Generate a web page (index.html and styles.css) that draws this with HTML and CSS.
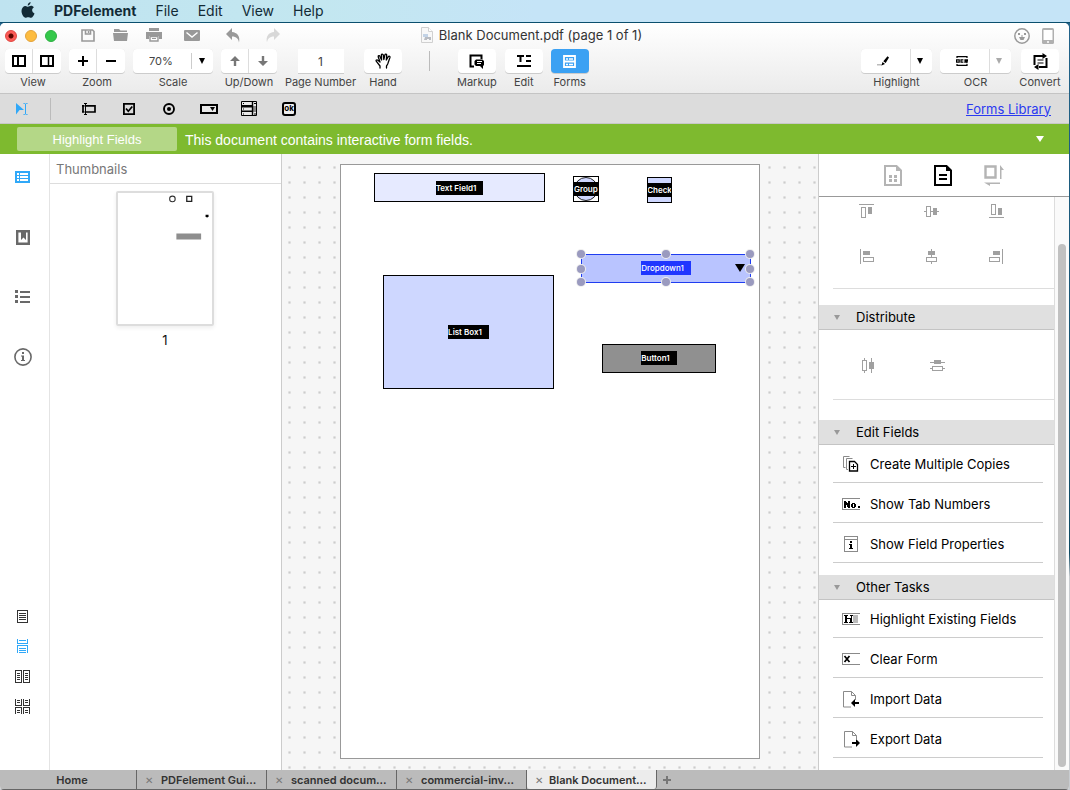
FILE: index.html
```html
<!DOCTYPE html>
<html lang="en">
<head>
<meta charset="utf-8">
<title>Blank Document.pdf (page 1 of 1)</title>
<link rel="stylesheet" href="styles.css">
</head>
<body>
<nav class="menubar" aria-label="Application menu">
  <button class="menu apple" aria-label="System menu"><svg width="14" height="17" viewBox="0 0 14 17"><path fill="currentColor" d="M9.6 0c.1 1.700-1.100 3.400-2.900 3.600C6.500 2 8 .3 9.600 0zM7 4.700c.7 0 1.600-.9 3-.9 1.200 0 2.300.6 2.900 1.500-2.600 1.600-2.200 5 .6 6.100-.6 1.700-2 4.400-3.600 4.400-1 0-1.400-.6-2.700-.6s-1.800.6-2.700.6C2.700 15.800.5 12.200.5 9.100c0-3.200 1.900-5.200 4-5.200 1.100 0 1.900.8 2.500.8z"/></svg></button>
  <button class="menu menu-app">PDFelement</button>
  <button class="menu">File</button>
  <button class="menu">Edit</button>
  <button class="menu">View</button>
  <button class="menu">Help</button>
</nav>

<div class="window">
  <header class="chrome">
    <div class="titlebar">
      <div class="title-left">
        <div class="lights">
          <button class="light close" aria-label="Close"></button>
          <button class="light minimize" aria-label="Minimize"></button>
          <button class="light maximize" aria-label="Zoom window"></button>
        </div>
        <div class="quick">
          <button aria-label="Save"><svg width="14" height="13" viewBox="0 0 14 13" fill="none" stroke="#999" stroke-width="1.600"><path d="M1 1h10.500L13 2.500V12H1z"/><path d="M4.500 1v4h5V1"/><path d="M7.500 2v2" stroke-width="1.400"/></svg></button>
          <button aria-label="Open"><svg width="15" height="12" viewBox="0 0 15 12" fill="#999"><path d="M1 0h5l1.500 1.500H14V3H1zM0 4h15l-1 8H1z"/></svg></button>
          <button aria-label="Print"><svg width="16" height="14" viewBox="0 0 16 14"><path fill="#999" d="M3 0h10v3H3zM0 4h16v7h-3V8H3v3H0z"/><path d="M4 8.500h8V13H4z" fill="#fff" stroke="#999" stroke-width="1.400"/><path d="M6 10.500h4" stroke="#999"/></svg></button>
          <button aria-label="Mail"><svg width="16" height="11" viewBox="0 0 16 11"><rect width="16" height="11" rx="1" fill="#999"/><path d="M2.500 2.500 8 7l5.500-4.500" fill="none" stroke="#fff" stroke-width="1.400"/></svg></button>
          <button aria-label="Undo"><svg width="15" height="15" viewBox="0 0 15 15" fill="#999"><path d="M6 0v4c5 .2 8.500 4.500 7 10.500C12.500 11 10.500 8.500 6 8.500V12L0 6z"/></svg></button>
          <button aria-label="Redo"><svg width="15" height="15" viewBox="0 0 15 15" fill="#d8d8d8"><path d="M9 0v4C4 4.200.5 8.500 2 14.500 2.500 11 4.500 8.500 9 8.500V12l6-6z"/></svg></button>
        </div>
      </div>
      <div class="title">
        <svg width="12" height="16" viewBox="0 0 12 16"><path d="M.5.500h7l4 4v11H.5z" fill="#f8f8f8" stroke="#d0d0d0"/><path d="M7.500.500v4h4" fill="#fff" stroke="#d0d0d0"/><path d="M2 7h5v3H2z" fill="#c3d3e6"/><path d="M4 10h6v3H8v-1H6v1H3z" fill="#b9bcc2"/></svg>
        <span>Blank Document.pdf (page 1 of 1)</span>
      </div>
      <div class="title-right">
        <button aria-label="Feedback"><svg width="16" height="16" viewBox="0 0 16 16"><circle cx="8" cy="8" r="7.200" fill="none" stroke="#999" stroke-width="1.500"/><path fill="#999" d="M4 5h2v2H4zM10 5h2v2h-2zM5 9h6l-1.500 3h-3zM7.500 7h1v2h-1z"/></svg></button>
        <button aria-label="Mobile"><svg width="12" height="16" viewBox="0 0 12 16"><rect width="12" height="16" rx="1.500" fill="#b0b0b0"/><path d="M1.500 2h9v10h-9zM5 13.200h2v1.500H5z" fill="#fff"/></svg></button>
      </div>
    </div>

    <div class="toolbar">
      <div class="group">
        <div class="pair">
          <button aria-label="Left sidebar"><svg width="14" height="12" viewBox="0 0 14 12" fill="none" stroke="#000"><rect x="1" y="1" width="12" height="10" stroke-width="2"/><path d="M6 1v10" stroke-width="2"/></svg></button>
          <button aria-label="Right sidebar"><svg width="14" height="12" viewBox="0 0 14 12" fill="none" stroke="#000"><rect x="1" y="1" width="12" height="10" stroke-width="2"/><path d="M8.500 1v10" stroke-width="1.500"/></svg></button>
        </div>
        <span class="caption">View</span>
      </div>
      <div class="group">
        <div class="pair">
          <button aria-label="Zoom in"><svg width="10" height="10" viewBox="0 0 10 10"><path d="M0 5h10M5 0v10" stroke="#000" stroke-width="2"/></svg></button>
          <button aria-label="Zoom out"><svg width="10" height="10" viewBox="0 0 10 10"><path d="M0 5h10" stroke="#000" stroke-width="2"/></svg></button>
        </div>
        <span class="caption">Zoom</span>
      </div>
      <div class="group">
        <div class="pair scale">
          <select id="scale"><option>70%</option></select>
          <svg class="scale-arrow" width="6" height="6" viewBox="0 0 6 6"><path d="M0 0h6L3 6z"/></svg>
        </div>
        <label class="caption" for="scale">Scale</label>
      </div>
      <div class="group">
        <div class="pair">
          <button aria-label="Page up"><svg width="10" height="10" viewBox="0 0 10 10" fill="#777"><path d="M5 0l5 5H6.200v5H3.800V5H0z"/></svg></button>
          <button aria-label="Page down"><svg width="10" height="10" viewBox="0 0 10 10" fill="#777"><path d="M5 10l5-5H6.200V0H3.800v5H0z"/></svg></button>
        </div>
        <span class="caption">Up/Down</span>
      </div>
      <div class="group page-group">
        <input class="page-input" id="page-number" type="text" value="1">
        <label class="caption" for="page-number">Page Number</label>
      </div>
      <div class="group">
        <button class="tool" aria-labelledby="cap-hand"><svg width="17" height="16" viewBox="0 0 17 16" fill="none" stroke="#000" stroke-width="1.300" stroke-linecap="round" stroke-linejoin="round"><path d="M5 15v-2L1.200 8.200c-.6-1 .8-1.700 1.600-.9L5 9 3.200 3.800c-.2-1.200 1.300-1.500 1.700-.5L6.600 7 6.400 2c0-1.300 1.700-1.300 1.900 0L8.800 6.500 9.900 1.900c.3-1.200 1.900-.9 1.800.3L11.300 7l2-3.300c.7-1 2-.3 1.700.7L13.200 9.500c-.3 2-1.200 2.500-1.700 3.500v2"/></svg></button>
        <span class="caption" id="cap-hand">Hand</span>
      </div>
      <span class="divider"></span>
      <div class="group">
        <button class="tool" aria-labelledby="cap-markup"><svg width="16" height="15" viewBox="0 0 16 15"><path d="M5 12.500H1.500v-11h11V5" fill="none" stroke="#000" stroke-width="2"/><path d="M7 5.500h6.500L15 7v4l-1 1v3l-3-3H7l-1.500-1.500V7z"/><path d="M8 7.500h5M8 9.500h4" stroke="#fff"/></svg></button>
        <span class="caption" id="cap-markup">Markup</span>
      </div>
      <div class="group">
        <button class="tool" aria-labelledby="cap-edit"><svg width="14" height="12" viewBox="0 0 14 12" stroke="#000" stroke-width="2"><path d="M0 1h7M3.500 1v6M9 1h5M9 6h5M0 11h14"/></svg></button>
        <span class="caption" id="cap-edit">Edit</span>
      </div>
      <div class="group">
        <button class="tool active" aria-labelledby="cap-forms"><svg width="13" height="13" viewBox="0 0 13 13"><path fill="none" stroke="#fff" stroke-width="1.800" d="M1 1h11v11H1zM1 6.500h11"/><path stroke="#fff" stroke-width="1.500" d="M3 4h2M6 4h4M3 9.500h2M6 9.500h4"/></svg></button>
        <span class="caption" id="cap-forms">Forms</span>
      </div>
      <div class="group push">
        <div class="split">
          <button aria-labelledby="cap-highlight"><svg width="12" height="10" viewBox="0 0 12 10"><path d="M0 8h5v1.500H0z" fill="#bbb"/><path d="M4.500 9.500 5.500 6l2.500 2zM6.300 5.200 10.500.3 12 1.500 8.700 7z"/></svg></button>
          <button aria-label="Highlight options"><svg width="6" height="6" viewBox="0 0 6 6"><path d="M0 0h6L3 6z"/></svg></button>
        </div>
        <span class="caption" id="cap-highlight">Highlight</span>
      </div>
      <div class="group">
        <div class="split ocr">
          <button aria-labelledby="cap-ocr"><svg width="12" height="10" viewBox="0 0 12 10" fill="none" stroke="#000" stroke-width="1.200"><path d="M1 2V.6h10V2M1 8v1.400h10V8"/><path d="M.6 3.800h2.600v2.400H.6zM7.400 3.800H5v2.400h2.400M9 7V3.800h2.400v1.400H9.600L11.400 7"/></svg></button>
          <button aria-label="OCR options"><svg width="6" height="6" viewBox="0 0 6 6" fill="#aaa"><path d="M0 0h6L3 6z"/></svg></button>
        </div>
        <span class="caption" id="cap-ocr">OCR</span>
      </div>
      <div class="group">
        <button class="tool" aria-labelledby="cap-convert"><svg width="15" height="17" viewBox="0 0 15 17"><path d="M1.500 12V3H10M13.500 5v9H6" fill="none" stroke="#000" stroke-width="2"/><path d="M9.500 0 14 3 9.500 6zM5.500 11 1 14l4.500 3z"/><path d="M4.500 7h6M4.500 10h6" stroke="#000" stroke-width="1.200"/></svg></button>
        <span class="caption" id="cap-convert">Convert</span>
      </div>
    </div>
  </header>

  <div class="formbar">
    <button class="select-tool" aria-label="Select"><svg width="12" height="12" viewBox="0 0 12 12"><path d="M0 0l8 7H3.500L0 11.500z" fill="#30a8f8"/><path d="M7.500.500h1.200l.8.500.8-.5h1.200M9.500 1v10M7.500 11.500h1.200l.8-.5.8.5h1.200" fill="none" stroke="#30a8f8"/></svg></button>
    <span class="formbar-rule"></span>
    <button aria-label="Text field"><svg width="14" height="12" viewBox="0 0 14 12" fill="none" stroke="#000"><path d="M4 2.800h9V9H4M0 2.800h2.500M0 9h2.500M1 2.800V9" stroke-width="1.700"/><path d="M3.500 0v12M2 .5h3M2 11.500h3"/></svg></button>
    <button aria-label="Check box"><svg width="12" height="12" viewBox="0 0 12 12" fill="none" stroke="#000"><path d="M.9.900h10.200v10.200H.9z" stroke-width="1.800"/><path d="M3 5.500l2.300 2.700 4-4.700" stroke-width="1.700"/></svg></button>
    <button aria-label="Radio button"><svg width="12" height="12" viewBox="0 0 12 12"><circle cx="6" cy="6" r="5" fill="none" stroke="#000" stroke-width="1.900"/><circle cx="6" cy="6" r="2"/></svg></button>
    <button aria-label="Dropdown"><svg width="18" height="10" viewBox="0 0 18 10"><path d="M1 1h16v8H1z" fill="#e8e8e8" stroke="#000" stroke-width="2"/><path d="M10 3h5l-2.500 4z"/></svg></button>
    <button aria-label="List box"><svg width="16" height="15" viewBox="0 0 16 15"><path d="M.5.500h15v14H.5z" fill="#e8e8e8" stroke="#000"/><path d="M0 4h12v2.500H0zM0 9.500h12V11H0z"/><path d="M12 5h3v6h-3z" fill="#888"/><path d="M11.500 0v15" stroke="#000" stroke-width="1.400"/><path d="M2 2.500h1M2 8h1M2 13h1M13 2.500h2M13 13h2" stroke="#000"/></svg></button>
    <button class="ok-tool" aria-label="Button">ok</button>
    <a class="library" href="#">Forms Library</a>
  </div>

  <div class="notice">
    <button class="notice-btn">Highlight Fields</button>
    <span class="notice-text">This document contains interactive form fields.</span>
    <button class="notice-toggle" aria-label="Notice options"><svg width="8" height="6" viewBox="0 0 8 6" fill="#fff"><path d="M0 0h8L4 6z"/></svg></button>
  </div>

  <main class="workspace">
    <nav class="rail" aria-label="Panels">
      <button aria-label="Thumbnails"><svg width="15" height="12" viewBox="0 0 15 12" shape-rendering="crispEdges"><path d="M0 0h15v12H0z" fill="#30a8f8"/><path d="M2 2h2v2H2zM5 2h8v2H5zM2 5h2v2H2zM5 5h8v2H5zM2 8h2v2H2zM5 8h8v2H5z" fill="#fff"/></svg></button>
      <button aria-label="Bookmarks"><svg width="14" height="15" viewBox="0 0 14 15"><path d="M1.200 1.200h11.600v12.600H1.200z" fill="#fff" stroke="#696969" stroke-width="2.400"/><path d="M5 2h5v8L7.500 7.500 5 10z" fill="#696969"/></svg></button>
      <button aria-label="Outline"><svg width="15" height="14" viewBox="0 0 15 14" fill="#696969"><path d="M0 0h3v3H0zM0 5h3v3H0zM0 10h3v3H0zM5 1h10v2H5zM5 6h10v2H5zM5 11h10v2H5z"/></svg></button>
      <button aria-label="Information"><svg width="18" height="18" viewBox="0 0 18 18"><circle cx="9" cy="9" r="8.100" fill="none" stroke="#696969" stroke-width="1.600"/><path d="M8 4h2v2H8zM7 7.500h3V12h1v1H7v-1h1V8.500H7z" fill="#696969"/></svg></button>
      <div class="view-modes">
        <button aria-label="Single page"><svg width="11" height="13" viewBox="0 0 11 13" fill="none" stroke="#333" shape-rendering="crispEdges"><path d="M.5.500h10v12H.5zM2 3.500h7M2 5.500h7M2 7.500h7M2 9.500h7"/></svg></button>
        <button aria-label="Continuous"><svg width="11" height="14" viewBox="0 0 11 14" fill="none" stroke="#30a8f8" shape-rendering="crispEdges"><path d="M.5 0v4.500h10V0M2 1.500h7M.5 14V6.500h10V14M2 9.500h7M2 11.500h7M2 13.500h7"/></svg></button>
        <button aria-label="Two pages"><svg width="15" height="13" viewBox="0 0 15 13" fill="none" stroke="#333" shape-rendering="crispEdges"><path d="M.5.500h6v12h-6zM8.500.500h6v12h-6zM2 3.500h3M2 5.500h3M2 7.500h3M2 9.500h3M10 3.500h3M10 5.500h3M10 7.500h3M10 9.500h3"/></svg></button>
        <button aria-label="Two pages continuous"><svg width="15" height="15" viewBox="0 0 15 15" fill="none" stroke="#333" shape-rendering="crispEdges"><path d="M.5 0v6.500h6V0M8.500 0v6.500h6V0M2 1.500h3M2 3.500h3M10 1.500h3M10 3.500h3M.5 15V8.500h6V15M8.500 15V8.500h6V15M2 11.500h3M2 13.500h3M10 11.500h3M10 13.500h3"/></svg></button>
      </div>
    </nav>

    <aside class="thumbs">
      <h2 class="thumbs-title">Thumbnails</h2>
      <figure class="thumb">
        <svg class="thumb-page" viewBox="0 0 95 132"><circle cx="55" cy="6" r="2.800" fill="none" stroke="#333" stroke-width="1.100"/><path d="M69.500 3.500h5v5h-5z" fill="none" stroke="#222" stroke-width="1.300"/><path d="M88.500 22h3v1.500L90 25l-1.500-1.500z"/><path d="M59 41h25v6H59z" fill="#8e8e8e"/></svg>
        <figcaption>1</figcaption>
      </figure>
    </aside>

    <section class="canvas" aria-label="Document">
      <div class="page">
        <div class="field text-field"><span class="tag">Text Field1</span></div>
        <div class="field group-field"><svg class="ring" width="24" height="24" viewBox="0 0 24 24"><circle cx="12" cy="12" r="11.500" fill="#ced6ff" stroke="#222"/></svg><span class="tag">Group</span></div>
        <div class="field check-field"><span class="tag">Check</span></div>
        <div class="field dropdown-field">
          <span class="tag">Dropdown1</span>
          <svg class="drop-arrow" width="10" height="8" viewBox="0 0 10 8"><path d="M0 0h10L5 8z"/></svg>
          <i class="handle nw"></i><i class="handle n"></i><i class="handle ne"></i><i class="handle w"></i>
          <i class="handle e"></i><i class="handle sw"></i><i class="handle s"></i><i class="handle se"></i>
        </div>
        <div class="field list-field"><span class="tag">List Box1</span></div>
        <div class="field button-field"><span class="tag">Button1</span></div>
      </div>
    </section>

    <aside class="inspector">
      <div class="inspector-tabs">
        <button aria-label="Page form"><svg width="18" height="21" viewBox="0 0 18 21" fill="none" stroke="#b4b4b4" stroke-width="2"><path d="M1 1h11.500L17 5.500V20H1z"/><path d="M12 0v6h6z" fill="#b4b4b4" stroke="none"/><path d="M5 11.500h3M10 11.500h3M5 15.500h3M10 15.500h3" stroke-width="3"/></svg></button>
        <button aria-label="Field tasks"><svg width="18" height="21" viewBox="0 0 18 21" fill="none" stroke="#000" stroke-width="2"><path d="M1 1h11.500L17 5.500V20H1z"/><path d="M12 0v6h6z" fill="#000" stroke="none"/><path d="M5 10h8M5 14h8"/></svg></button>
        <button aria-label="Page size"><svg width="20" height="22" viewBox="0 0 20 22"><path d="M1.500 2.500h10v11h-10z" fill="none" stroke="#b4b4b4" stroke-width="2.400"/><path d="M16 1l4 5h-2.500v9H16zM0 18.500h16v1.500H6v2z" fill="#b4b4b4"/></svg></button>
      </div>
      <div class="inspector-main">
        <div class="inspector-body">
          <div class="align-grid">
            <button aria-label="Align top"><svg width="15" height="15" viewBox="0 0 15 15" fill="none" stroke="#a0a0a0" shape-rendering="crispEdges"><path d="M0 .5h15M2.500 3.500h4v10h-4z"/><path d="M9 3h4v7H9z" fill="#a0a0a0" stroke="none"/></svg></button>
            <button aria-label="Align middle"><svg width="15" height="15" viewBox="0 0 15 15" fill="none" stroke="#a0a0a0" shape-rendering="crispEdges"><path d="M2.500 2.500h4v10h-4zM0 7.500h2M7 7.500h8"/><path d="M9 4h4v7H9z" fill="#a0a0a0" stroke="none"/></svg></button>
            <button aria-label="Align bottom"><svg width="15" height="15" viewBox="0 0 15 15" fill="none" stroke="#a0a0a0" shape-rendering="crispEdges"><path d="M0 13.500h15M2.500.500h4v10h-4z"/><path d="M9 4h4v7H9z" fill="#a0a0a0" stroke="none"/></svg></button>
            <button aria-label="Align left"><svg width="15" height="15" viewBox="0 0 15 15" fill="none" stroke="#a0a0a0" shape-rendering="crispEdges"><path d="M1.500 0v15M4.500 8.500h10v4h-10z"/><path d="M4 2h7v4H4z" fill="#a0a0a0" stroke="none"/></svg></button>
            <button aria-label="Align center"><svg width="15" height="15" viewBox="0 0 15 15" fill="none" stroke="#a0a0a0" shape-rendering="crispEdges"><path d="M7.500 0v8M7.500 13v2M2.500 8.500h10v4h-10z"/><path d="M4 2h7v4H4z" fill="#a0a0a0" stroke="none"/></svg></button>
            <button aria-label="Align right"><svg width="15" height="15" viewBox="0 0 15 15" fill="none" stroke="#a0a0a0" shape-rendering="crispEdges"><path d="M13.500 0v15M.5 8.500h10v4H.5z"/><path d="M4 2h7v4H4z" fill="#a0a0a0" stroke="none"/></svg></button>
          </div>
          <h3 class="section"><svg width="6" height="5" viewBox="0 0 6 5"><path d="M0 0h6L3 5z"/></svg>Distribute</h3>
          <div class="distribute">
            <button aria-label="Distribute horizontally"><svg width="15" height="15" viewBox="0 0 15 15" fill="none" stroke="#a0a0a0" shape-rendering="crispEdges"><path d="M2.500 2.500h4v10h-4zM4.500 0v2M4.500 13v2M11.500 0v15"/><path d="M9 4h5v7H9z" fill="#a0a0a0" stroke="none"/></svg></button>
            <button aria-label="Distribute vertically"><svg width="15" height="15" viewBox="0 0 15 15" fill="none" stroke="#a0a0a0" shape-rendering="crispEdges"><path d="M0 4.500h15M0 10.500h2M13 10.500h2M2.500 8.500h10v4h-10z"/><path d="M4 2h7v4H4z" fill="#a0a0a0" stroke="none"/></svg></button>
          </div>
          <h3 class="section"><svg width="6" height="5" viewBox="0 0 6 5"><path d="M0 0h6L3 5z"/></svg>Edit Fields</h3>
          <div class="tasks">
            <button class="task"><svg width="18" height="16" viewBox="0 0 18 16" fill="none" stroke="#8a8a8a"><path d="M3.500 11.500h-2V.500h6M6 13.500H4.500v-11h6"/><path d="M7.500 5.500h5l3 3v6.500h-8z" fill="#fff" stroke="#000" stroke-width="1.300"/><path d="M9 10.500h5M11.500 8v5" stroke="#000"/></svg>Create Multiple Copies</button>
            <button class="task"><svg width="18" height="13" viewBox="0 0 18 13" shape-rendering="crispEdges"><path d="M18 .5H.5v11H18" fill="none" stroke="#8a8a8a"/><path d="M2 3h2l2 3V3h2v7H6.500L4 6.500V10H2zM10 5h3v1h1v3h-1v1h-3V9H9V6h1zm1 1v3h1V6zM16 8h2v2h-2z" fill-rule="evenodd"/></svg>Show Tab Numbers</button>
            <button class="task"><svg width="18" height="16" viewBox="0 0 18 16" shape-rendering="crispEdges"><path d="M2.500.500h13v15h-13zM3 3.500h12" fill="none" stroke="#8a8a8a"/><path d="M8 5h2v2H8zM7 8h3v4h1v1H7v-1h1V9H7z"/></svg>Show Field Properties</button>
          </div>
          <h3 class="section"><svg width="6" height="5" viewBox="0 0 6 5"><path d="M0 0h6L3 5z"/></svg>Other Tasks</h3>
          <div class="tasks">
            <button class="task"><svg width="18" height="12" viewBox="0 0 18 12" shape-rendering="crispEdges"><path d="M11 2h5v8h-5z" fill="#bbb"/><path d="M18 .5H.5v11H18" fill="none" stroke="#8a8a8a"/><path d="M2 2h4v1H5v2h4V3H8V2h3v1h-1v6h1v1H7V9h1V6H5v3h1v1H2V9h1V3H2z"/></svg>Highlight Existing Fields</button>
            <button class="task"><svg width="18" height="12" viewBox="0 0 18 12"><path d="M18 .5H.5v11H18" fill="none" stroke="#8a8a8a" shape-rendering="crispEdges"/><path d="M2.500 3l5 6M7.500 3l-5 6" stroke="#000" stroke-width="1.700"/></svg>Clear Form</button>
            <button class="task"><svg width="18" height="17" viewBox="0 0 18 17"><path d="M9 16H1.500V.5h8l4 4V9M9.500.500v4h4" fill="none" stroke="#8a8a8a"/><path d="M9 12l4-4v3h4v2h-4v3z"/></svg>Import Data</button>
            <button class="task"><svg width="18" height="17" viewBox="0 0 18 17"><path d="M10 16H2.500V.5h8l4 4V8M10.500.500v4h4" fill="none" stroke="#8a8a8a"/><path d="M18 12l-4-4v3h-4v2h4v3z"/></svg>Export Data</button>
          </div>
        </div>
        <div class="scrollbar"><div class="thumb-bar"></div></div>
      </div>
    </aside>
  </main>

  <footer class="tabs">
    <button class="tab home">Home</button>
    <div class="tab"><button class="tab-x" aria-label="Close tab">✕</button><button class="tab-name">PDFelement Gui...</button></div>
    <div class="tab"><button class="tab-x" aria-label="Close tab">✕</button><button class="tab-name">scanned docum...</button></div>
    <div class="tab"><button class="tab-x" aria-label="Close tab">✕</button><button class="tab-name">commercial-inv...</button></div>
    <div class="tab current"><button class="tab-x" aria-label="Close tab">✕</button><button class="tab-name">Blank Document...</button></div>
    <button class="tab-add" aria-label="New tab"><svg width="8" height="8" viewBox="0 0 8 8"><path d="M0 4h8M4 0v8" stroke="#777" stroke-width="2"/></svg></button>
  </footer>
</div>
</body>
</html>
```
FILE: styles.css
```css
* {
  box-sizing: border-box;
}

body {
  margin: 0;
  height: 100vh;
  display: flex;
  flex-direction: column;
  overflow: hidden;
  background: linear-gradient(#24648c 0, #0d4a63 70%, #c8ccd0 73%);
  font-family: Inter, "Liberation Sans", sans-serif;
  font-size: 13px;
  color: #111;
}

button,
input,
select {
  margin: 0;
  padding: 0;
  border: 0;
  background: none;
  font: inherit;
  color: inherit;
}

button svg,
.title svg {
  display: block;
}

/* Menu bar */
.menubar {
  flex: none;
  display: flex;
  align-items: center;
  gap: 19px;
  height: 23px;
  padding: 0 0 1px 21px;
  border-bottom: 1px solid #0b4f6e;
  background: linear-gradient(90deg, #bfe3f0, #c3e7f0 30%, #c5e4f7 50%);
  color: #122a36;
  font-size: 14px;
}

.menu-app {
  font-weight: 700;
}

/* Window frame */
.window {
  flex: 1;
  min-height: 0;
  display: flex;
  flex-direction: column;
  margin-right: 1px;
  border-radius: 5px 5px 4px 4px;
  overflow: hidden;
  background: #fff;
}

.chrome {
  flex: none;
  border-bottom: 1px solid #c4c4c4;
  background: linear-gradient(#fff, #ebebeb);
}

.titlebar {
  display: grid;
  grid-template-columns: 1fr auto 1fr;
  align-items: center;
  height: 26px;
  padding: 0 15px 0 5px;
}

.title-left,
.lights,
.quick,
.title,
.title-right {
  display: flex;
  align-items: center;
}

.title-left {
  gap: 14px;
}

.lights {
  gap: 8px;
}

.light {
  width: 12px;
  height: 12px;
  border-radius: 50%;
}

.close {
  border: 1px solid #e0443e;
  background: radial-gradient(circle, #5c0500 0 2px, #fc5b57 3px);
}

.minimize {
  border: 1px solid #e3a33c;
  background: #fdbc40;
}

.maximize {
  border: 1px solid #2fb044;
  background: #34c84a;
}

.quick {
  padding-bottom: 2px;
}

.quick button {
  display: flex;
  justify-content: center;
  width: 39px;
}

.quick button:nth-child(-n+3) {
  width: 33px;
}

.quick button:nth-child(4) {
  width: 44px;
}

.title {
  gap: 6px;
  padding: 0 0 2px 4px;
  color: #333;
}

.title-right {
  justify-content: flex-end;
  gap: 12px;
}

/* Main toolbar */
.toolbar {
  display: flex;
  align-items: flex-start;
  gap: 8px;
  height: 44px;
  padding: 0 8px 0 5px;
}

.group {
  display: flex;
  flex-direction: column;
  align-items: center;
  gap: 1px;
}

.page-group {
  width: 71px;
}

.push {
  margin-left: auto;
}

.group:last-child {
  width: 42px;
}

.caption {
  white-space: nowrap;
  font-size: 11px;
  line-height: 16px;
  color: #444;
}

.pair,
.split {
  position: relative;
  display: flex;
  gap: 1px;
  height: 24px;
  border-radius: 4px;
  background: #ddd;
  box-shadow: 0 1px 0 #ccc;
}

.pair button,
.split button {
  display: flex;
  align-items: center;
  justify-content: center;
  width: 28px;
  background: #fff;
}

.pair > :first-child,
.split > :first-child {
  width: 27px;
  border-radius: 4px 0 0 4px;
}

.pair > button:last-child,
.split > button:last-child {
  border-radius: 0 4px 4px 0;
}

.split > button:first-child {
  width: 49px;
  padding-right: 5px;
}

.split > button:last-child {
  width: 21px;
  padding-right: 3px;
}

.scale > select:first-child {
  width: 80px;
  padding-left: 16px;
  border-radius: 4px;
  appearance: none;
  background: linear-gradient(#ccc, #ccc) 58px 4px / 1px 16px no-repeat #fff;
  font-size: 11px;
  color: #444;
}

.scale-arrow {
  position: absolute;
  top: 9px;
  right: 8px;
}

.page-input {
  width: 46px;
  height: 24px;
  background: #fff;
  box-shadow: 0 1px 0 #ccc;
  text-align: center;
  font-size: 12px;
  color: #444;
}

.tool {
  display: flex;
  align-items: center;
  justify-content: center;
  width: 38px;
  height: 24px;
  border-radius: 4px;
  background: #fff;
  box-shadow: 0 1px 0 #ccc;
}

.tool.active {
  background: #3ba1f3;
}

.divider {
  width: 1px;
  height: 20px;
  margin: 2px 19px;
  background: #bbb;
}

/* Form field toolbar */
.formbar {
  flex: none;
  display: flex;
  align-items: center;
  height: 30px;
  padding: 0 18px 0 2px;
  border-bottom: 1px solid #c8c8c8;
  background: #dcdcdc;
}

.formbar button {
  display: flex;
  justify-content: center;
  width: 40px;
}

.formbar-rule {
  width: 1px;
  height: 22px;
  margin: 0 18px 0 8px;
  background: #bbb;
}

.formbar .ok-tool {
  width: 14px;
  height: 14px;
  margin: 0 13px;
  border: 2px solid #000;
  border-radius: 3px;
  background: #eee;
  color: #000;
  font-size: 8px;
  font-weight: 700;
  line-height: 9px;
}

.library {
  margin-left: auto;
  color: #2a3af0;
}

/* Notice bar */
.notice {
  flex: none;
  display: flex;
  align-items: center;
  gap: 8px;
  height: 30px;
  padding: 0 25px 0 17px;
  background: #7eba2f;
  color: #fff;
  font-family: "Liberation Sans", sans-serif;
  font-size: 14px;
}

.notice-btn {
  width: 160px;
  height: 24px;
  border-radius: 2px;
  background: #b4d787;
  font-size: 13px;
}

.notice-text {
  padding-top: 2px;
}

.notice-toggle {
  margin-left: auto;
}

/* Workspace */
.workspace {
  flex: 1;
  min-height: 0;
  display: flex;
}

.rail {
  flex: none;
  display: flex;
  flex-direction: column;
  width: 50px;
  padding: 8px 4px 49px 0;
  border-right: 1px solid #e4e4e4;
}

.rail button {
  display: flex;
  align-items: center;
  justify-content: center;
  height: 30px;
  margin-bottom: 30px;
}

.view-modes {
  display: flex;
  flex-direction: column;
  margin-top: auto;
}

.rail .view-modes button {
  margin: 0;
}

.thumbs {
  flex: none;
  width: 232px;
  border-right: 1px solid #ccc;
}

.thumbs-title {
  margin: 0;
  padding: 2px 6px 0;
  border-bottom: 1px solid #ddd;
  font-size: 13px;
  font-weight: 400;
  line-height: 27px;
  color: #777;
}

.thumb {
  display: flex;
  flex-direction: column;
  align-items: center;
  gap: 6px;
  margin: 7px 1px 0 0;
}

.thumb-page {
  width: 98px;
  border: 2px solid #ddd;
  border-radius: 2px;
  box-shadow: 0 2px 4px #eee;
}

/* Document canvas */
.canvas {
  flex: 1;
  display: flex;
  justify-content: center;
  padding: 10px 0 11px;
  background: radial-gradient(circle, #ccc 0, #ddd 1px, transparent 2px) 0 6px / 15px 15px #f6f6f6;
}

.page {
  position: relative;
  width: 420px;
  border: 1px solid #999;
  background: #fff;
}

.field {
  position: absolute;
  display: flex;
  align-items: center;
  justify-content: center;
  border: 1px solid #000;
  background: #ced7ff;
}

.tag {
  position: relative;
  padding-right: 7px;
  background: #000;
  color: #fff;
  font-size: 8px;
  font-weight: 600;
  line-height: 14px;
  white-space: nowrap;
}

.text-field {
  left: 33px;
  top: 8px;
  width: 171px;
  height: 29px;
  background: #e6eaff;
}

.group-field,
.check-field {
  width: 26px;
  height: 26px;
  overflow: hidden;
}

.group-field {
  left: 232px;
  top: 11px;
  background: #fff;
}

.check-field {
  left: 306px;
  top: 12px;
  width: 25px;
}

.group-field .tag,
.check-field .tag {
  flex: 1;
  padding: 0;
}

.ring {
  position: absolute;
  top: 0;
  left: 0;
}

.dropdown-field {
  left: 240px;
  top: 89px;
  width: 170px;
  height: 29px;
  padding-bottom: 2px;
  border-color: #1f3df0;
  background: #b9c4ff;
}

.dropdown-field .tag {
  background: #1f36ff;
  font-weight: 500;
}

.drop-arrow {
  position: absolute;
  top: 9px;
  right: 5px;
}

.handle {
  position: absolute;
  width: 8px;
  height: 8px;
  margin: -4px;
  border-radius: 50%;
  background: #9a9abf;
  box-shadow: 0 0 0 1px #eee;
}

.nw, .n, .ne { top: -1px; }
.w, .e { top: 50%; }
.sw, .s, .se { top: 100%; }
.nw, .w, .sw { left: -1px; }
.n, .s { left: 50%; }
.ne, .e, .se { left: 100%; }

.list-field {
  left: 42px;
  top: 110px;
  width: 171px;
  height: 114px;
}

.button-field {
  left: 261px;
  top: 179px;
  width: 114px;
  height: 29px;
  padding-bottom: 2px;
  background: #909090;
}

/* Inspector */
.inspector {
  flex: none;
  display: flex;
  flex-direction: column;
  width: 251px;
  border-left: 1px solid #ccc;
}

.inspector-tabs {
  flex: none;
  display: flex;
  align-items: center;
  justify-content: center;
  gap: 32px;
  height: 43px;
  border-bottom: 1px solid #999;
}

.inspector-main {
  flex: 1;
  min-height: 0;
  display: flex;
}

.inspector-body {
  flex: 1;
  overflow: hidden;
}

.align-grid,
.distribute {
  margin: 0 0 16px 14px;
  border-bottom: 1px solid #ddd;
}

.align-grid {
  display: grid;
  grid-template-columns: repeat(3, 65px);
  row-gap: 30px;
  padding: 7px 0 24px 1px;
}

.align-grid button {
  display: flex;
  justify-content: center;
}

.distribute {
  display: flex;
  gap: 55px;
  margin-bottom: 20px;
  padding: 28px 0 26px 27px;
}

.section {
  display: flex;
  align-items: center;
  gap: 16px;
  height: 25px;
  margin: 0;
  padding-left: 15px;
  border-bottom: 1px solid #c4c4c4;
  background: #e0e0e0;
  font-size: 13px;
  font-weight: 400;
  color: #000;
}

.section svg {
  fill: #999;
}

.tasks {
  display: flex;
  flex-direction: column;
  margin: 0 11px 12px 14px;
}

.task {
  display: flex;
  align-items: center;
  gap: 10px;
  height: 40px;
  padding: 3px 0 0 9px;
  border-bottom: 1px solid #ccc;
  text-align: left;
  color: #000;
}

.task:first-child {
  height: 38px;
  padding-top: 1px;
}

.scrollbar {
  width: 15px;
  padding: 47px 3px 3px;
  border-left: 1px solid #ddd;
  background: #fafafa;
}

.thumb-bar {
  height: 100%;
  border-radius: 4px;
  background: #c1c1c1;
}

/* Document tabs */
.tabs {
  flex: none;
  display: flex;
  height: 20px;
  border-bottom: 1px solid #666;
  background: #bbb;
  color: #333;
  font-size: 11px;
  font-weight: 600;
}

.tab {
  display: flex;
  align-items: center;
  gap: 8px;
  width: 130px;
  padding: 1px 0 0 8px;
  border-right: 1px solid #666;
  white-space: nowrap;
}

.home {
  justify-content: center;
  width: 137px;
}

.tab-x {
  width: 8px;
  font-size: 10px;
  font-weight: 400;
  color: #777;
}

.current {
  gap: 6px;
  padding-top: 0;
  border-radius: 0 0 3px 3px;
  background: #ececec;
}

.tab-add {
  margin-left: 6px;
}
```
